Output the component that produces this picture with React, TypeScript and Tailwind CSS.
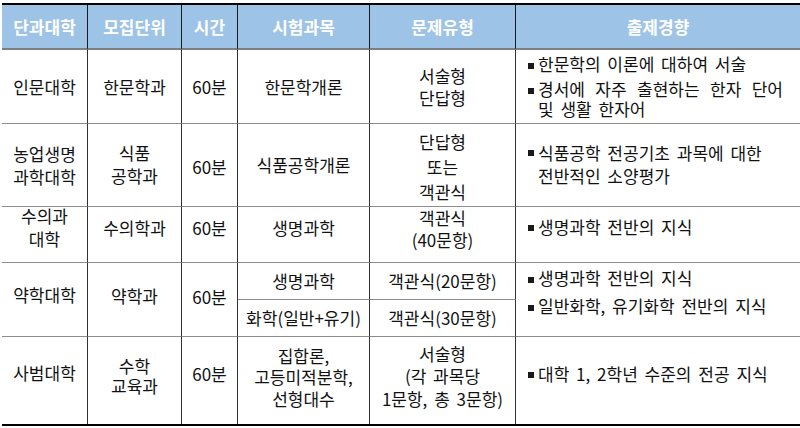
const head =
  "flex items-center justify-center bg-[#9dc3e6] font-bold text-white border-r border-r-[#1a1a1a] border-b-2 border-b-[#7f7f7f]";
const cell =
  "flex flex-col items-center justify-center text-center border-r border-r-[#333333] border-b border-b-[#8c8c8c]";
const last = "flex flex-col justify-center pl-[12px] border-b border-b-[#8c8c8c]";
const bottom = "flex flex-col items-center justify-center text-center border-r border-r-[#333333]";

function Bullet({ children }: { children: React.ReactNode }) {
  return (
    <div className="flex">
      <span className="mt-[9px] mr-[4px] h-[6px] w-[6px] shrink-0 bg-[#1a1a1a]" />
      <div>{children}</div>
    </div>
  );
}

export default function App() {
  return (
    <div className="h-[428px] w-[800px] overflow-hidden bg-white pt-[3px] pl-[2px] font-['Noto_Sans_CJK_KR',sans-serif] text-[17px] leading-[22px] text-[#111111] [word-spacing:3px]">
      <div className="grid grid-cols-[86px_94px_56px_132px_146px_1fr] grid-rows-[45px_74px_83px_56px_37px_37px_87px] border-t-2 border-t-black border-b-2 border-b-black">
        {/* header */}
        <div className={head}>단과대학</div>
        <div className={head}>모집단위</div>
        <div className={head}>시간</div>
        <div className={head}>시험과목</div>
        <div className={head}>문제유형</div>
        <div className="flex items-center justify-center bg-[#9dc3e6] font-bold text-white border-b-2 border-b-[#7f7f7f]">
          출제경향
        </div>

        {/* 인문대학 */}
        <div className={cell}>인문대학</div>
        <div className={cell}>한문학과</div>
        <div className={cell}>60분</div>
        <div className={cell}>한문학개론</div>
        <div className={`${cell} leading-[22px]`}>
          <p>
            서술형
            <br />
            단답형
          </p>
        </div>
        <div className={`${last} gap-[5px] leading-[20px]`}>
          <Bullet>한문학의 이론에 대하여 서술</Bullet>
          <Bullet>
            <p className="w-[245px] text-justify">경서에 자주 출현하는 한자 단어 및&nbsp;생활 한자어</p>
          </Bullet>
        </div>

        {/* 농업생명과학대학 */}
        <div className={`${cell} leading-[23px]`}>
          <p>
            농업생명
            <br />
            과학대학
          </p>
        </div>
        <div className={`${cell} pb-[3px] leading-[23px]`}>
          <p>
            식품
            <br />
            공학과
          </p>
        </div>
        <div className={`${cell} pt-[3px]`}>60분</div>
        <div className={cell}>식품공학개론</div>
        <div className={`${cell} pt-[3px] leading-[25px]`}>
          <p>
            단답형
            <br />
            또는
            <br />
            객관식
          </p>
        </div>
        <div className={`${last} pb-[3px] leading-[23px]`}>
          <Bullet>
            <p>
              식품공학 전공기초 과목에 대한
              <br />
              전반적인 소양평가
            </p>
          </Bullet>
        </div>

        {/* 수의과대학 */}
        <div className={`${cell} pb-[16px] leading-[23px]`}>
          <p>
            수의과
            <br />
            대학
          </p>
        </div>
        <div className={`${cell} pb-[13px]`}>수의학과</div>
        <div className={`${cell} pb-[13px]`}>60분</div>
        <div className={`${cell} pb-[13px]`}>생명과학</div>
        <div className={`${cell} pb-[11px] leading-[22px]`}>
          <p>
            객관식
            <br />
            (40문항)
          </p>
        </div>
        <div className={`${last} pb-[16px]`}>
          <Bullet>생명과학 전반의 지식</Bullet>
        </div>

        {/* 약학대학 */}
        <div className={`${cell} row-span-2 pb-[9px]`}>약학대학</div>
        <div className={`${cell} row-span-2 pb-[8px]`}>약학과</div>
        <div className={`${cell} row-span-2 pb-[5px]`}>60분</div>
        <div className={cell}>생명과학</div>
        <div className={cell}>객관식(20문항)</div>
        <div className={`${last} row-span-2 gap-[8px] pb-[15px] leading-[20px]`}>
          <Bullet>생명과학 전반의 지식</Bullet>
          <Bullet>일반화학, 유기화학 전반의 지식</Bullet>
        </div>
        <div className={cell}>화학(일반+유기)</div>
        <div className={cell}>객관식(30문항)</div>

        {/* 사범대학 */}
        <div className={`${bottom} pb-[16px]`}>사범대학</div>
        <div className={`${bottom} pb-[10px] leading-[20px]`}>
          <p>
            수학
            <br />
            교육과
          </p>
        </div>
        <div className={`${bottom} pb-[13px]`}>60분</div>
        <div className={`${bottom} pb-[7px] leading-[21.5px]`}>
          <p>
            집합론,
            <br />
            고등미적분학,
            <br />
            선형대수
          </p>
        </div>
        <div className={`${bottom} pb-[8px] leading-[22.5px]`}>
          <p>
            서술형
            <br />
            (각 과목당
            <br />
            1문항, 총 3문항)
          </p>
        </div>
        <div className="flex flex-col justify-center pl-[12px] pb-[14px]">
          <Bullet>대학 1, 2학년 수준의 전공 지식</Bullet>
        </div>
      </div>
    </div>
  );
}
